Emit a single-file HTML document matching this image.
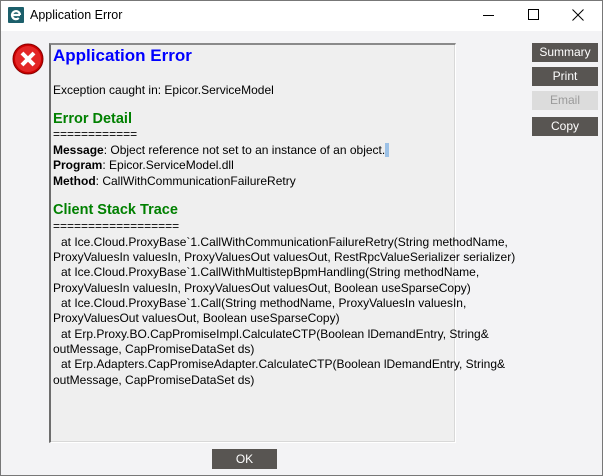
<!DOCTYPE html>
<html><head><meta charset="utf-8"><style>
*{margin:0;padding:0;box-sizing:border-box}
body{width:603px;height:476px;background:#f3f3f5;font-family:"Liberation Sans",Arial,sans-serif;position:relative;overflow:hidden}
.frame{position:absolute;left:0;top:0;width:603px;height:476px;border:1px solid #777;pointer-events:none}
.tb{position:absolute;left:0;top:0;width:603px;height:31px;background:#fff}
.tt{position:absolute;left:30px;top:8px;font-size:12.5px;color:#000}
.box{position:absolute;left:49px;top:43px;width:407px;height:400px;background:#efefef;border-left:2px solid #6d6d6d;border-top:2px solid #8a8a8a;border-right:1px solid #fff;border-bottom:1px solid #fff;box-shadow:inset -1px -1px 0 #d8d8d8}
.l{position:absolute;white-space:nowrap;font-size:12px;color:#000;line-height:14px}
.h{font-weight:bold;color:#008000;font-size:14.5px}
.btn{position:absolute;left:532px;width:66px;height:19px;background:#585552;color:#fff;font-size:12px;text-align:center;line-height:19px}
</style></head><body>
<div class="tb">
<svg style="position:absolute;left:8px;top:7px" width="16" height="16"><rect width="16" height="16" rx="1" fill="#1c5f6b"/><path d="M4 8h8M12 8a4 4 0 1 0-1.2 3" stroke="#fff" stroke-width="2.2" fill="none"/></svg>
<div class="tt">Application Error</div>
<div style="position:absolute;left:483px;top:15px;width:11px;height:1px;background:#000"></div>
<div style="position:absolute;left:528px;top:9px;width:11px;height:11px;border:1px solid #000"></div>
<svg style="position:absolute;left:572px;top:9px" width="12" height="12"><path d="M0.5 0.5L11.5 11.5M11.5 0.5L0.5 11.5" stroke="#000" stroke-width="1"/></svg>
</div>
<svg style="position:absolute;left:12px;top:43px" width="32" height="32"><circle cx="16" cy="16" r="15" fill="#c00" stroke="#8a0000"/><circle cx="16" cy="16" r="13" fill="#e32626"/><path d="M10 10L22 22M22 10L10 22" stroke="#fff" stroke-width="4"/></svg>
<div class="box"></div>
<div class="l" style="left:53px;top:47px;font-size:17px;font-weight:bold;color:#0000ff;line-height:18px">Application Error</div>
<div class="l" style="left:53px;top:83px">Exception caught in: Epicor.ServiceModel</div>
<div class="l h" style="left:53px;top:111px;line-height:16px">Error Detail</div>
<div class="l" style="left:53px;top:127px">============</div>
<div class="l" style="left:53px;top:143px"><b>Message</b>: Object reference not set to an instance of an object.<span style="background:#9cc1e6">&nbsp;</span></div>
<div class="l" style="left:53px;top:158px"><b>Program</b>: Epicor.ServiceModel.dll</div>
<div class="l" style="left:53px;top:174px"><b>Method</b>: CallWithCommunicationFailureRetry</div>
<div class="l h" style="left:53px;top:202px;line-height:16px">Client Stack Trace</div>
<div class="l" style="left:53px;top:219px">==================</div>
<div class="l" style="left:61px;top:235px">at Ice.Cloud.ProxyBase`1.CallWithCommunicationFailureRetry(String methodName,</div>
<div class="l" style="left:53px;top:250px">ProxyValuesIn valuesIn, ProxyValuesOut valuesOut, RestRpcValueSerializer serializer)</div>
<div class="l" style="left:61px;top:265px">at Ice.Cloud.ProxyBase`1.CallWithMultistepBpmHandling(String methodName,</div>
<div class="l" style="left:53px;top:281px">ProxyValuesIn valuesIn, ProxyValuesOut valuesOut, Boolean useSparseCopy)</div>
<div class="l" style="left:61px;top:296px">at Ice.Cloud.ProxyBase`1.Call(String methodName, ProxyValuesIn valuesIn,</div>
<div class="l" style="left:53px;top:311px">ProxyValuesOut valuesOut, Boolean useSparseCopy)</div>
<div class="l" style="left:61px;top:327px">at Erp.Proxy.BO.CapPromiseImpl.CalculateCTP(Boolean lDemandEntry, String&amp;</div>
<div class="l" style="left:53px;top:342px">outMessage, CapPromiseDataSet ds)</div>
<div class="l" style="left:61px;top:357px">at Erp.Adapters.CapPromiseAdapter.CalculateCTP(Boolean lDemandEntry, String&amp;</div>
<div class="l" style="left:53px;top:373px">outMessage, CapPromiseDataSet ds)</div>
<div class="btn" style="top:43px">Summary</div>
<div class="btn" style="top:67px">Print</div>
<div class="btn" style="top:91px;background:#dcdcdc;color:#9a9a9a">Email</div>
<div class="btn" style="top:117px">Copy</div>
<div class="btn" style="left:212px;top:449px;width:65px;height:20px;line-height:20px">OK</div>
<div class="frame"></div>
</body></html>
